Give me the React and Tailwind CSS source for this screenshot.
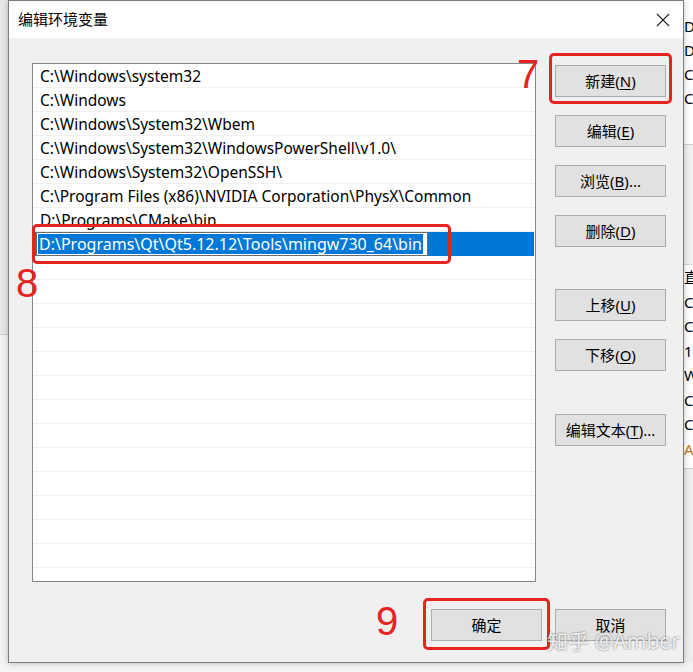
import React from "react";

const rows = [
  "C:\\Windows\\system32",
  "C:\\Windows",
  "C:\\Windows\\System32\\Wbem",
  "C:\\Windows\\System32\\WindowsPowerShell\\v1.0\\",
  "C:\\Windows\\System32\\OpenSSH\\",
  "C:\\Program Files (x86)\\NVIDIA Corporation\\PhysX\\Common",
  "D:\\Programs\\CMake\\bin",
];

function Btn({ label, m, tail = "", className = "" }) {
  return (
    <div
      className={
        "w-[111px] h-[32px] bg-[#e1e1e1] border border-[#adadad] flex items-center justify-center text-[15px] text-black " +
        className
      }
    >
      <span>
        {label}
        {m ? (
          <>
            (<span className="underline underline-offset-2">{m}</span>)
          </>
        ) : null}
        {tail}
      </span>
    </div>
  );
}

export default function App() {
  const empty = Array.from({ length: 15 });
  return (
    <div className="relative w-[693px] h-[672px] overflow-hidden bg-[#f4f4f4] font-['Noto_Sans','Noto_Sans_CJK_SC',sans-serif]">
      <div className="flex h-[663px]">
        {/* left background strip */}
        <div className="w-[8px] flex flex-col">
          <div className="h-[335px] bg-[#e7e7e7] border-b border-[#d0d0d0]" />
          <div className="flex-1 bg-[#f3f3f3]" />
        </div>

        {/* dialog */}
        <div className="w-[676px] h-[663px] border border-[#7d7d7d] flex flex-col shadow-[0_0_6px_rgba(0,0,0,0.25)] z-10">
          <div className="h-[37px] bg-white flex items-center justify-between pl-[9px] pr-[13px]">
            <span className="text-[15px] text-black">编辑环境变量</span>
            <svg width="14" height="14" viewBox="0 0 14 14">
              <path d="M1 1L13 13M13 1L1 13" stroke="#222" strokeWidth="1.1" fill="none" />
            </svg>
          </div>
          <div className="flex-1 bg-[#f0f0f0] flex flex-col pl-[23px] pt-[25px]">
            <div className="flex gap-[19px]">
              <div className="w-[504px] h-[519px] bg-white border border-[#828790] overflow-hidden text-[15.5px] text-black">
                {rows.map((r) => (
                  <div key={r} className="h-[24px] border-b border-[#f0f0f0] flex items-center pl-[7px] pt-[3px] whitespace-nowrap">
                    {r}
                  </div>
                ))}
                <div className="h-[24px] mx-px bg-[#0078d7] flex items-center pl-[2px]">
                  <div className="h-[24px] w-[392px] bg-white border border-[#6a6a6a] flex items-center pl-[1px]">
                    <span className="bg-[#0078d7] text-white text-[16px] leading-[20px] px-px whitespace-nowrap">
                      D:\Programs\Qt\Qt5.12.12\Tools\mingw730_64\bin
                    </span>
                  </div>
                </div>
                {empty.map((_, i) => (
                  <div key={i} className="h-[24px] border-b border-[#f0f0f0]" />
                ))}
              </div>
              <div className="flex flex-col mt-[2px]">
                <Btn label="新建" m="N" />
                <Btn label="编辑" m="E" className="mt-[18px]" />
                <Btn label="浏览" m="B" tail="..." className="mt-[18px]" />
                <Btn label="删除" m="D" className="mt-[18px]" />
                <Btn label="上移" m="U" className="mt-[42px]" />
                <Btn label="下移" m="O" className="mt-[18px]" />
                <Btn label="编辑文本" m="T" tail="..." className="mt-[43px]" />
              </div>
            </div>
            <div className="flex justify-end gap-[13px] mt-[27px] pr-[17px]">
              <Btn label="确定" className="w-[110px]" />
              <Btn label="取消" />
            </div>
          </div>
        </div>

        {/* right background strip */}
        <div className="flex-1 flex flex-col text-[15px] text-black overflow-hidden">
          <div className="h-[145px] bg-white border-b border-[#cfcfcf] pt-[14px] leading-[24px] whitespace-nowrap">
            <div>D:\</div>
            <div>D:\</div>
            <div>C:\</div>
            <div>C:\</div>
          </div>
          <div className="h-[120px] bg-[#f0f0f0] border-b border-[#d6d6d6]" />
          <div className="h-[203px] bg-white leading-[24.5px] whitespace-nowrap">
            <div>直</div>
            <div>C:\</div>
            <div>C:\</div>
            <div>16</div>
            <div>W</div>
            <div>C:\</div>
            <div>C</div>
            <div className="text-[#c07a20]">A</div>
          </div>
          <div className="flex-1 bg-[#efefef] border-t border-[#cfcfcf]" />
        </div>
      </div>

      {/* red annotations */}
      <div className="absolute left-[549px] top-[53px] w-[123px] h-[51px] border-[3px] border-[#e8231f] rounded-[5px] z-20" />
      <div className="absolute left-[32px] top-[224px] w-[419px] h-[40px] border-[3px] border-[#e8231f] rounded-[5px] z-20" />
      <div className="absolute left-[423px] top-[598px] w-[127px] h-[52px] border-[3px] border-[#e8231f] rounded-[5px] z-20" />
      <div className="absolute left-[517px] top-[50px] text-[40px] leading-[48px] text-[#e8231f] font-['Liberation_Sans',sans-serif] z-20">7</div>
      <div className="absolute left-[16px] top-[259px] text-[40px] leading-[48px] text-[#e8231f] font-['Liberation_Sans',sans-serif] z-20">8</div>
      <div className="absolute left-[376px] top-[597px] text-[40px] leading-[48px] text-[#e8231f] font-['Liberation_Sans',sans-serif] z-20">9</div>

      {/* watermark */}
      <div className="absolute left-[547px] top-[627px] text-[21px] leading-[28px] text-white/85 [text-shadow:0_0_2px_rgba(0,0,0,0.6)] z-20 whitespace-nowrap">
        知乎 @Amber
      </div>
    </div>
  );
}
